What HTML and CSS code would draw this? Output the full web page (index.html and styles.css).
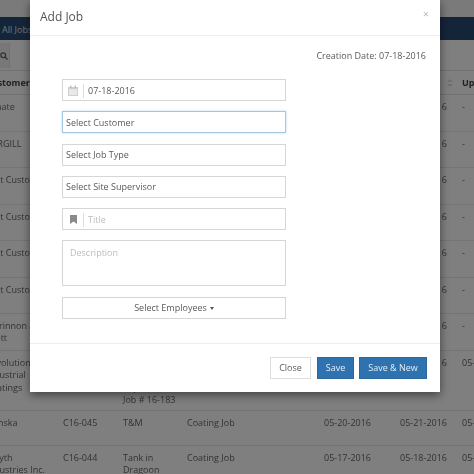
FILE: index.html
```html
<!DOCTYPE html>
<html lang="en">
<head>
<meta charset="utf-8">
<title>Add Job</title>
<link rel="stylesheet" href="styles.css">
</head>
<body>
<div class="page">
  <div class="topstrip"></div>
  <div class="navbar"><span class="navtitle">All Jobs</span></div>
  <div class="toolbar">
    <span class="searchbtn">
      <svg width="8" height="8" viewBox="0 0 10 10"><circle cx="4" cy="4" r="3" fill="none" stroke="#666" stroke-width="1.6"/><path d="M6.3 6.3 9.4 9.4" stroke="#666" stroke-width="1.8"/></svg>
    </span>
  </div>
  <table class="jobs">
    <colgroup>
      <col class="c1"><col class="c2"><col class="c3"><col class="c4"><col class="c5"><col class="c6"><col class="c7">
    </colgroup>
    <thead>
      <tr><th>Customer</th><th>Job #</th><th>Name</th><th>Type</th><th>Start</th><th>End<svg class="sort" width="6" height="8" viewBox="0 0 6 8"><path d="M3 0 6 3H0zM3 8 0 5h6z" fill="#ddd"/></svg></th><th>Updated</th></tr>
    </thead>
    <tbody>
      <tr><td>Senate</td><td>C16-051</td><td>T&amp;M</td><td>Coating Job</td><td>07-18-2016</td><td>07-18-2016</td><td>-</td></tr>
      <tr><td>CARGILL</td><td>C16-050</td><td>T&amp;M</td><td>Coating Job</td><td>07-18-2016</td><td>07-18-2016</td><td>-</td></tr>
      <tr><td>Test Customer</td><td>C16-049</td><td>T&amp;M</td><td>Coating Job</td><td>07-15-2016</td><td>07-16-2016</td><td>-</td></tr>
      <tr><td>Test Customer</td><td>C16-048</td><td>T&amp;M</td><td>Coating Job</td><td>07-15-2016</td><td>07-16-2016</td><td>-</td></tr>
      <tr><td>Test Customer</td><td>C16-047</td><td>T&amp;M</td><td>Coating Job</td><td>07-14-2016</td><td>07-16-2016</td><td>-</td></tr>
      <tr><td>Test Customer</td><td>C16-046</td><td>T&amp;M</td><td>Coating Job</td><td>07-14-2016</td><td>07-16-2016</td><td>-</td></tr>
      <tr><td>Marinnon and Scott</td><td>C16-046</td><td>T&amp;M</td><td>Coating Job</td><td>07-12-2016</td><td>07-16-2016</td><td>-</td></tr>
      <tr class="tall"><td>Revolution Industrial Coatings</td><td>C16-046</td><td>Storage<br>Tank<br>Repair<br>Job # 16-183</td><td>Coating Job</td><td>05-23-2016</td><td>05-24-2016</td><td>05-25-2016</td></tr>
      <tr class="short"><td>Ivanska</td><td>C16-045</td><td>T&amp;M</td><td>Coating Job</td><td>05-20-2016</td><td>05-21-2016</td><td>05-22-2016</td></tr>
      <tr><td>Smyth Industries Inc.</td><td>C16-044</td><td>Tank in Dragoon</td><td>Coating Job</td><td>05-17-2016</td><td>05-18-2016</td><td>05-19-2016</td></tr>
    </tbody>
  </table>
</div>

<div class="backdrop"></div>

<div class="modal">
  <div class="modal-head">
    <h4>Add Job</h4>
    <span class="close-x">&times;</span>
  </div>
  <div class="modal-body">
    <p class="created">Creation Date: 07-18-2016</p>
    <form class="form">
      <div class="field with-icon">
        <span class="addon">
          <svg width="10" height="11" viewBox="0 0 10 11"><path d="M0 2h10v9H0z" fill="#cfcfcf"/><path d="M1 4.2h8V10H1z" fill="#e9e9e9"/><path d="M2.2 0.6h1.2v2.4H2.2zM6.6 0.6h1.2v2.4H6.6z" fill="#b5b5b5"/></svg>
        </span>
        <span class="value">07-18-2016</span>
      </div>
      <div class="field focus"><span class="value">Select Customer</span></div>
      <div class="field"><span class="value">Select Job Type</span></div>
      <div class="field"><span class="value">Select Site Supervisor</span></div>
      <div class="field with-icon">
        <span class="addon">
          <svg width="7" height="9" viewBox="0 0 7 9"><path d="M0 0h7v9L3.5 6.4 0 9z" fill="#8a8a8a"/></svg>
        </span>
        <span class="value placeholder">Title</span>
      </div>
      <div class="field area"><span class="value placeholder">Description</span></div>
      <div class="field picker"><span class="value">Select Employees</span><span class="caret"></span></div>
    </form>
  </div>
  <div class="modal-foot">
    <span class="btn plain">Close</span>
    <span class="btn primary">Save</span>
    <span class="btn primary wide">Save &amp; New</span>
  </div>
</div>
</body>
</html>
```

FILE: styles.css
```css
* { box-sizing: border-box; }
html, body { margin: 0; height: 474px; overflow: hidden; }
body { font-family: "Open Sans", "Liberation Sans", sans-serif; font-size: 9px; color: #666; background: #fff; filter: blur(.35px); }

.page { width: 474px; height: 474px; overflow: hidden; }
.topstrip { height: 17px; background: #f4f4f4; }
.navbar { height: 23px; background: #2b4a72; color: #d8e2ee; font-size: 9px; line-height: 25px; padding-left: 2px; }
.toolbar { height: 30px; padding-top: 3px; background: #fff; }
.searchbtn { display: flex; align-items: center; width: 10px; height: 25px; background: #f1f1f1; border-right: 1px solid #e2e2e2; }

.jobs { border-collapse: collapse; table-layout: fixed; width: 565px; margin-left: -22px; line-height: 12.4px; }
.c1 { width: 77px; } .c2 { width: 60px; } .c3 { width: 64px; } .c4 { width: 137px; }
.c5 { width: 76px; } .c6 { width: 62px; } .c7 { width: 89px; }
.jobs th { height: 24px; padding: 1px 0 0 8px; text-align: left; font-weight: 700; color: #444; border-top: 1px solid #e2e2e2; border-bottom: 1px solid #e2e2e2; white-space: nowrap; overflow: hidden; }
.sort { float: right; margin: 2px 1px 0 0; }
.jobs td { height: 36.5px; padding: 6px 0 5px 8px; vertical-align: top; border-bottom: 1px solid #e8e8e8; }
.jobs .tall td { height: 60px; padding-bottom: 0; }
.jobs .short td { height: 35px; }

.backdrop { position: fixed; inset: 0; background: rgba(0, 0, 0, .5); }

.modal { position: fixed; left: 30px; top: 0; width: 410px; height: 392px; background: #fff; box-shadow: 0 3px 9px rgba(0, 0, 0, .5); display: flex; flex-direction: column; color: #5a5a5a; }
.modal-head { height: 36px; flex: none; display: flex; justify-content: space-between; padding: 10px 11px 0 10px; border-bottom: 1px solid #eeeeee; }
.modal-head h4 { margin: 0; font-size: 12px; line-height: 14px; font-weight: 400; color: #555; }
.close-x { font-size: 11px; line-height: 8px; margin-top: 0; color: #bbb; }
.modal-body { flex: 1; padding: 0 14px 0 32px; }
.created { margin: 14px 0 17px; height: 12px; line-height: 12px; text-align: right; }
.form { width: 224px; display: flex; flex-direction: column; gap: 10.3px; }
.field { height: 22px; border: 1px solid #d6d6d6; display: flex; align-items: center; padding: 1px 0 0 3px; line-height: 12px; background: #fff; }
.field.focus { border-color: #a3c9e2; box-shadow: 0 0 2px rgba(102, 175, 233, .5); }
.field.area { height: 46px; align-items: flex-start; padding: 6px 7px; }
.field.picker { justify-content: center; gap: 3px; padding: 1px 0 0; }
.with-icon { padding-left: 0; }
.addon { width: 21px; height: 14px; flex: none; display: flex; align-items: center; justify-content: center; border-right: 1px solid #dcdcdc; margin-right: 4px; }
.placeholder { color: #bdbdbd; }
.caret { width: 0; height: 0; border-left: 2.5px solid transparent; border-right: 2.5px solid transparent; border-top: 3px solid #555; }

.modal-foot { height: 49px; flex: none; display: flex; justify-content: flex-end; gap: 5px; padding: 13px 13px 0 0; border-top: 1px solid #eeeeee; }
.btn { height: 22px; display: flex; align-items: center; justify-content: center; border: 1px solid #ddd; line-height: 12px; }
.btn.plain { width: 41px; background: #fff; margin-right: 1px; }
.btn.primary { width: 37px; background: #2e73b0; border-color: #2a689f; color: #e4eef7; }
.btn.wide { width: 68px; }
```
